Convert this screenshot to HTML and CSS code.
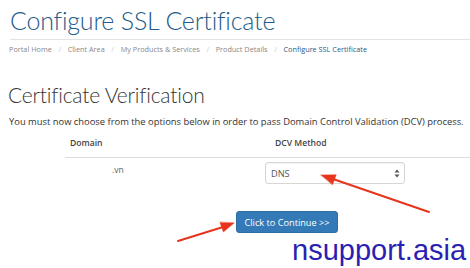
FILE: index.html
```html
<!DOCTYPE html>
<html lang="en">
<head>
    <meta charset="UTF-8">
    <title>Configure SSL Certificate</title>
    <link rel="stylesheet" href="styles.css">
</head>
<body>
    <div class="page">
        <div class="header">
            <h1>Configure SSL Certificate</h1>
        </div>
        <ol class="breadcrumb">
            <li>Portal Home</li>
            <li>Client Area</li>
            <li>My Products &amp; Services</li>
            <li>Product Details</li>
            <li class="active">Configure SSL Certificate</li>
        </ol>

        <h2>Certificate Verification</h2>
        <p class="intro">You must now choose from the options below in order to pass Domain Control Validation (DCV) process.</p>

        <div class="dcv-table">
            <div class="th th-domain">Domain</div>
            <div class="th th-method">DCV Method</div>
            <div class="td td-domain">.vn</div>
            <div class="td td-method">
                <div class="select-wrap">
                    <select class="select">
                        <option>DNS</option>
                    </select>
                    <svg class="select-caret" width="6" height="9" viewBox="0 0 6 9">
                        <path d="M3 0.5 L5.5 3.5 H0.5 Z M3 8.5 L5.5 5.5 H0.5 Z" fill="#555"/>
                    </svg>
                </div>
            </div>
        </div>

        <div class="actions">
            <button class="btn">Click to Continue &gt;&gt;</button>
        </div>
    </div>

    <svg class="arrows" width="470" height="268" viewBox="0 0 470 268">
        <g stroke="#e8341c" stroke-width="2" stroke-linecap="round" fill="#e8341c">
            <line x1="429" y1="212" x2="333" y2="179" />
            <polygon points="321,175 336.2,174.8 332.6,184.6" stroke-width="0.5" />
            <line x1="178" y1="241" x2="223" y2="227" />
            <polygon points="234,223 223.4,232 220,222.4" stroke-width="0.5" />
        </g>
    </svg>

    <div class="watermark">nsupport.asia</div>
</body>
</html>
```

FILE: styles.css
```css
html, body {
    margin: 0;
    background: #fff;
    overflow: hidden;
}
body {
    width: 470px;
    height: 268px;
    position: relative;
    font-family: 'Open Sans', sans-serif;
    color: #333;
}
.page {
    padding: 5px 0 0 8px;
}
.header {
    margin-left: 2px;
    border-bottom: 1px solid #e3e3e3;
    padding-bottom: 4px;
}
h1 {
    margin: 0;
    font-family: 'Lato', sans-serif;
    font-weight: 300;
    font-size: 25px;
    letter-spacing: -0.2px;
    line-height: 30px;
    color: #225b89;
}
.breadcrumb {
    list-style: none;
    margin: 0;
    padding: 4px 0 0 1px;
    display: flex;
    font-size: 7.3px;
    line-height: 10px;
    color: #888;
}
.breadcrumb li + li::before {
    content: '/';
    color: #ccc;
    padding: 0 6.6px;
}
.breadcrumb .active {
    color: #2a5a86;
}
h2 {
    margin: 28px 0 0 0;
    font-family: 'Lato', sans-serif;
    font-weight: 300;
    font-size: 21px;
    letter-spacing: -0.2px;
    line-height: 26px;
    color: #333;
}
.intro {
    margin: 8px 0 0 1px;
    font-size: 9.4px;
    line-height: 12px;
    white-space: nowrap;
}
.dcv-table {
    margin: 8px 0 0 57px;
    display: grid;
    grid-template-columns: 200px 1fr;
    font-size: 8.6px;
}
.th {
    font-weight: 600;
    color: #444;
    line-height: 11px;
    padding: 2px 0 8px;
    border-bottom: 1px solid #ddd;
}
.th-domain {
    padding-left: 5px;
}
.th-method {
    padding-left: 10px;
}
.td {
    padding-top: 4px;
}
.td-domain {
    padding-left: 47px;
    line-height: 10px;
    padding-top: 7px;
    color: #666;
}
.select-wrap {
    position: relative;
    width: 140px;
}
.select {
    appearance: none;
    -webkit-appearance: none;
    display: block;
    width: 140px;
    height: 22px;
    margin: 0;
    padding: 0 0 0 5px;
    border: 1px solid #d6d6d6;
    border-radius: 3px;
    background: #fff;
    box-shadow: inset 0 1px 1px rgba(0, 0, 0, 0.05);
    font-family: 'Open Sans', sans-serif;
    font-size: 9.2px;
    color: #555;
}
.select-caret {
    position: absolute;
    right: 5px;
    top: 7px;
}
.actions {
    margin: 27px 0 0 228px;
}
.btn {
    display: block;
    width: 102px;
    height: 22px;
    padding: 0;
    border: 1px solid #2e6da4;
    border-radius: 3px;
    background: #337ab7;
    color: #fff;
    font-family: 'Open Sans', sans-serif;
    font-size: 9.2px;
}
.arrows {
    position: absolute;
    left: 0;
    top: 0;
}
.watermark {
    position: absolute;
    left: 292px;
    top: 234px;
    font-family: 'Liberation Sans', Arial, sans-serif;
    font-size: 29px;
    line-height: 33px;
    color: #2a1fb3;
}
```
